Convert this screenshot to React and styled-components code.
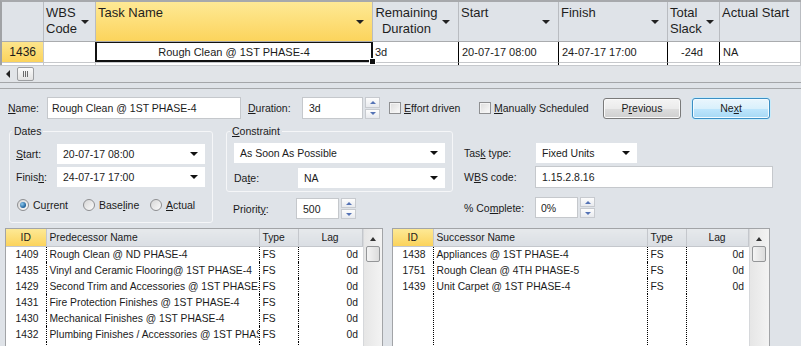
import React from 'react';
import styled, { createGlobalStyle } from 'styled-components';

const GlobalStyle = createGlobalStyle`
  html, body { margin: 0; padding: 0; background: #dfe3e8; }
  body { font-family: "Liberation Sans", Arial, sans-serif; color: #1b1b1b; }
  * { box-sizing: border-box; }
`;

const Screen = styled.div`
  width: 801px;
  height: 346px;
  overflow: hidden;
  background: #dfe3e8;
  display: flex;
  flex-direction: column;
  & > * { flex-shrink: 0; }
`;

/* ---------- top sheet ---------- */
const sheetCols = '42px 52px 277px 86px 100px 109px 52px 1fr';

const Sheet = styled.div`
  border-top: 2px solid #a7a9ac;
  border-left: 2px solid #a0a2a5;
  background: #fff;
`;

const HeadRow = styled.div`
  display: grid;
  grid-template-columns: ${sheetCols};
  height: 40px;
  background: #dfe3e8;
  border-bottom: 1px solid #a9abae;
`;

const HeadCell = styled.div`
  display: flex;
  padding: 3px 0 0 2px;
  border-right: 1px solid #b9bcc1;
  font-size: 13px;
  line-height: 16px;
  color: #1e1e1e;
  background: ${(p) => (p.$active ? 'linear-gradient(#fee995, #fcd45c)' : '#dfe3e8')};
`;

const HeadText = styled.div`
  flex: 1;
  text-align: ${(p) => p.$align || 'left'};
`;

const HeadArrow = styled.span`
  align-self: center;
  margin: 0 8px 3px 4px;
  width: 0;
  height: 0;
  border-left: 4px solid transparent;
  border-right: 4px solid transparent;
  border-top: 4px solid #222;
`;

const Body = styled.div`
  height: 23px;
  overflow: hidden;
`;

const DataRow = styled.div`
  display: grid;
  grid-template-columns: ${sheetCols};
  height: 21px;
`;

const Cell = styled.div`
  position: relative;
  display: flex;
  align-items: center;
  justify-content: ${(p) => p.$justify || 'flex-start'};
  padding: ${(p) => p.$pad || '0 3px'};
  font-size: ${(p) => p.$size || '11px'};
  border-right: 1px solid ${(p) => (p.$dark ? '#000' : '#c6c8cb')};
  border-bottom: 1px solid #c6c8cb;
  background: ${(p) => (p.$yellow ? 'linear-gradient(#fde58c, #fbd35c)' : '#fff')};
  white-space: nowrap;
`;

const SelectedCell = styled(Cell)`
  box-shadow: inset 0 0 0 2px #111;
  margin: -1px 0 0 -1px;
  border-right: none;
  z-index: 2;
  &::after {
    content: '';
    position: absolute;
    right: -3px;
    bottom: -3px;
    width: 5px;
    height: 5px;
    background: #111;
    border: 1px solid #fff;
  }
`;

const HScroll = styled.div`
  height: 18px;
  display: flex;
  align-items: center;
  gap: 7px;
  padding-left: 6px;
  background: #e1e4e8;
  border-top: 1px solid #c6c9cd;
  border-bottom: 1px solid #a4a6a9;
`;

const LeftTri = styled.span`
  width: 0;
  height: 0;
  border-top: 4px solid transparent;
  border-bottom: 4px solid transparent;
  border-right: 4px solid #222;
`;

const HThumb = styled.div`
  width: 17px;
  height: 14px;
  border: 1px solid #9c9ea1;
  border-radius: 2px;
  background: linear-gradient(#fbfbfb, #e2e2e2);
  display: flex;
  align-items: center;
  justify-content: center;
  gap: 1px;
  span {
    width: 1px;
    height: 6px;
    background: #6b6b6b;
  }
`;

const Band = styled.div`
  height: 6px;
  border-bottom: 1px solid #a6a8ab;
`;

/* ---------- form ---------- */
const Form = styled.div`
  flex: 1 1 auto;
  min-height: 0;
  overflow: hidden;
  padding-top: 8px;
  display: flex;
  flex-direction: column;
  & > * { flex-shrink: 0; }
`;

const TopLine = styled.div`
  display: flex;
  align-items: center;
  height: 22px;
  padding: 0 31px 0 8px;
`;

const Label = styled.div`
  width: ${(p) => p.$w}px;
  margin-left: ${(p) => p.$ml || 0}px;
  font-size: 10.5px;
  color: #1b1b1b;
  white-space: nowrap;
  flex-shrink: 0;
`;

const TextBox = styled.div`
  width: ${(p) => p.$w}px;
  height: ${(p) => p.$h || 22}px;
  flex-shrink: 0;
  display: flex;
  align-items: center;
  padding-left: ${(p) => p.$pl || 5}px;
  background: #fff;
  border: 1px solid #c5c8cc;
  font-size: 10.5px;
  white-space: nowrap;
`;

const Combo = styled(TextBox)`
  justify-content: space-between;
  padding-right: 6px;
  border-color: #fff;
`;

const ComboArrow = styled.span`
  width: 0;
  height: 0;
  border-left: 4px solid transparent;
  border-right: 4px solid transparent;
  border-top: 4px solid #111;
`;

const Spin = styled.div`
  width: 15px;
  height: ${(p) => p.$h || 22}px;
  margin-left: 2px;
  display: flex;
  flex-direction: column;
  gap: 1px;
  flex-shrink: 0;
`;

const SpinHalf = styled.div`
  flex: 1;
  display: flex;
  align-items: center;
  justify-content: center;
  border: 1px solid #c7cacf;
  background: linear-gradient(#fdfdfd, #e8eaee);
  &::before {
    content: '';
    width: 0;
    height: 0;
    border-left: 3px solid transparent;
    border-right: 3px solid transparent;
    ${(p) => (p.$down ? 'border-top: 3px solid #5573b5;' : 'border-bottom: 3px solid #5573b5;')}
  }
`;

const Check = styled.span`
  width: 12px;
  height: 12px;
  margin-left: ${(p) => p.$ml || 0}px;
  flex-shrink: 0;
  border: 1px solid #8e8f91;
  background: linear-gradient(135deg, #dcdcdc, #fbfbfb);
  box-shadow: inset 0 0 0 1px #f4f4f4;
`;

const Button = styled.div`
  width: 78px;
  height: 21px;
  margin-left: ${(p) => p.$ml || '0'};
  display: flex;
  align-items: center;
  justify-content: center;
  font-size: 10.5px;
  border-radius: 3px;
  border: 1px solid ${(p) => (p.$primary ? '#3c8fc4' : '#7a7a7a')};
  background: ${(p) =>
    p.$primary
      ? 'linear-gradient(#eaf6fd 0%, #d9f0fc 50%, #bee6fd 51%, #a7d9f5 100%)'
      : 'linear-gradient(#f4f4f4 0%, #ebebeb 50%, #dddddd 51%, #cfcfcf 100%)'};
  box-shadow: ${(p) => (p.$primary ? '0 0 0 1px #c7ebfb, inset 0 0 0 1px #f3fbff' : 'inset 0 0 0 1px #fafafa')};
`;

const MidLine = styled.div`
  display: flex;
  margin-top: 6px;
  height: 98px;
`;

const Group = styled.fieldset`
  margin: 0 0 0 ${(p) => p.$ml}px;
  width: ${(p) => p.$w}px;
  height: ${(p) => p.$h}px;
  padding: ${(p) => p.$pad};
  border: 1px solid #f5f6f8;
  border-radius: 3px;
  min-width: 0;
  flex-shrink: 0;
`;

const Legend = styled.legend`
  margin-left: -4px;
  padding: 0 2px;
  font-size: 10.5px;
  line-height: 12px;
  color: #1b1b1b;
`;

const FieldRow = styled.div`
  display: flex;
  align-items: center;
  margin-top: ${(p) => p.$mt || 0}px;
  padding-left: ${(p) => p.$pl || 0}px;
`;

const RadioItem = styled.div`
  display: flex;
  align-items: center;
  gap: 4px;
  width: ${(p) => p.$w}px;
  font-size: 10.5px;
  flex-shrink: 0;
`;

const Radio = styled.span`
  width: 12px;
  height: 12px;
  border-radius: 50%;
  border: 1px solid #8e8f91;
  background: linear-gradient(135deg, #d6d6d6, #fbfbfb);
  display: flex;
  align-items: center;
  justify-content: center;
  &::after {
    content: '';
    display: ${(p) => (p.$on ? 'block' : 'none')};
    width: 6px;
    height: 6px;
    border-radius: 50%;
    background: radial-gradient(circle at 35% 35%, #8ccaf0, #1d5f99 70%);
  }
`;

const Column = styled.div`
  display: flex;
  flex-direction: column;
  margin-left: ${(p) => p.$ml || 0}px;
  padding-top: ${(p) => p.$pt || 0}px;
`;

/* ---------- link tables ---------- */
const Links = styled.div`
  flex: 1 1 auto;
  min-height: 0;
  display: flex;
  margin-top: 5px;
  padding-left: 5px;
`;

const LinkBox = styled.div`
  width: 378px;
  height: calc(100% + 4px);
  margin-right: ${(p) => p.$mr || 0}px;
  display: flex;
  border: 1px solid #a2a4a7;
  background: #fff;
`;

const LinkTable = styled.table`
  width: ${(p) => p.$w}px;
  flex: none;
  height: 100%;
  table-layout: fixed;
  border-collapse: collapse;
  font-size: 10.3px;
`;

const Th = styled.th`
  height: 17px;
  padding: 0 3px;
  font-weight: normal;
  text-align: ${(p) => p.$align || 'left'};
  border-right: 1px solid #c4c7cc;
  border-bottom: 1px solid #c4c7cc;
  background: ${(p) => (p.$yellow ? 'linear-gradient(#fde995, #fbd35c)' : 'linear-gradient(#e6e9ec, #dadee3)')};
  white-space: nowrap;
  overflow: hidden;
`;

const Td = styled.td`
  height: 16px;
  padding: ${(p) => (p.$right ? '0 4px 0 0' : '0 3px')};
  text-align: ${(p) => (p.$right ? 'right' : 'left')};
  border-right: ${(p) => (p.$last ? 'none' : '1px dotted #000')};
  white-space: nowrap;
  overflow: hidden;
  text-overflow: clip;
  vertical-align: middle;
`;

const IdTd = styled(Td)`
  padding-right: 7px;
  text-align: right;
`;

const Filler = styled.tr`
  height: auto;
  td { height: auto; }
`;

const VScroll = styled.div`
  flex: 1;
  display: flex;
  flex-direction: column;
  align-items: center;
  padding-top: 8px;
  border-left: 1px solid #d6d8db;
  background: linear-gradient(90deg, #e6e6e6, #f3f3f3);
`;

const UpTri = styled.span`
  width: 0;
  height: 0;
  border-left: 3.5px solid transparent;
  border-right: 3.5px solid transparent;
  border-bottom: 4px solid #333;
`;

const VThumb = styled.div`
  margin-top: 5px;
  width: 14px;
  height: 16px;
  border: 1px solid #949698;
  border-radius: 2px;
  background: linear-gradient(90deg, #f4f4f4, #dcdcdc);
`;

const predecessors = [
  ['1409', 'Rough Clean @ ND PHASE-4'],
  ['1435', 'Vinyl and Ceramic Flooring@ 1ST PHASE-4'],
  ['1429', 'Second Trim and Accessories @ 1ST PHASE-4'],
  ['1431', 'Fire Protection Finishes @ 1ST PHASE-4'],
  ['1430', 'Mechanical Finishes @ 1ST PHASE-4'],
  ['1432', 'Plumbing Finishes / Accessories @ 1ST PHASE-4'],
];

const successors = [
  ['1438', 'Appliances @ 1ST PHASE-4'],
  ['1751', 'Rough Clean @ 4TH PHASE-5'],
  ['1439', 'Unit Carpet @ 1ST PHASE-4'],
];

function LinkGrid({ title, rows, widths, mr }) {
  const total = widths.reduce((a, b) => a + b, 0);
  return (
    <LinkBox $mr={mr}>
      <LinkTable $w={total}>
        <colgroup>
          {widths.map((w, i) => (
            <col key={i} style={{ width: w }} />
          ))}
        </colgroup>
        <thead>
          <tr>
            <Th $yellow $align="center">ID</Th>
            <Th>{title}</Th>
            <Th>Type</Th>
            <Th $align="center">Lag</Th>
          </tr>
        </thead>
        <tbody>
          {rows.map(([id, name]) => (
            <tr key={id}>
              <IdTd>{id}</IdTd>
              <Td>{name}</Td>
              <Td>FS</Td>
              <Td $right $last>0d</Td>
            </tr>
          ))}
          <Filler>
            <Td />
            <Td />
            <Td />
            <Td $last />
          </Filler>
        </tbody>
      </LinkTable>
      <VScroll>
        <UpTri />
        <VThumb />
      </VScroll>
    </LinkBox>
  );
}

function SpinBox({ h }) {
  return (
    <Spin $h={h}>
      <SpinHalf />
      <SpinHalf $down />
    </Spin>
  );
}

export default function App() {
  return (
    <Screen>
      <GlobalStyle />
      <Sheet>
        <HeadRow>
          <HeadCell />
          <HeadCell>
            <HeadText>WBS<br />Code</HeadText>
            <HeadArrow />
          </HeadCell>
          <HeadCell $active>
            <HeadText>Task Name</HeadText>
            <HeadArrow />
          </HeadCell>
          <HeadCell>
            <HeadText $align="center">Remaining<br />Duration</HeadText>
            <HeadArrow />
          </HeadCell>
          <HeadCell>
            <HeadText>Start</HeadText>
            <HeadArrow />
          </HeadCell>
          <HeadCell>
            <HeadText>Finish</HeadText>
            <HeadArrow />
          </HeadCell>
          <HeadCell>
            <HeadText>Total<br />Slack</HeadText>
            <HeadArrow />
          </HeadCell>
          <HeadCell>
            <HeadText>Actual Start</HeadText>
          </HeadCell>
        </HeadRow>
        <Body>
          <DataRow>
            <Cell $yellow $justify="flex-end" $pad="0 7px 0 0" $size="12px">1436</Cell>
            <Cell />
            <SelectedCell $justify="center">Rough Clean @ 1ST PHASE-4</SelectedCell>
            <Cell $dark $pad="0 2px">3d</Cell>
            <Cell $dark>20-07-17 08:00</Cell>
            <Cell $dark>24-07-17 17:00</Cell>
            <Cell $dark $justify="flex-end" $pad="0 16px 0 0">-24d</Cell>
            <Cell>NA</Cell>
          </DataRow>
          <DataRow>
            <Cell />
            <Cell />
            <Cell />
            <Cell $dark />
            <Cell $dark />
            <Cell $dark />
            <Cell $dark />
            <Cell />
          </DataRow>
        </Body>
      </Sheet>
      <HScroll>
        <LeftTri />
        <HThumb>
          <span />
          <span />
          <span />
        </HThumb>
      </HScroll>
      <Band />

      <Form>
        <TopLine>
          <Label $w={39}><u>N</u>ame:</Label>
          <TextBox $w={194} $pl={4}>Rough Clean @ 1ST PHASE-4</TextBox>
          <Label $w={54} $ml={7}><u>D</u>uration:</Label>
          <TextBox $w={61} $pl={6}>3d</TextBox>
          <SpinBox />
          <Check $ml={9} />
          <Label $w={75} $ml={3}><u>E</u>ffort driven</Label>
          <Check />
          <Label $w={100} $ml={3}><u>M</u>anually Scheduled</Label>
          <Button $ml="auto">P<u>r</u>evious</Button>
          <Button $primary $ml="11px">Ne<u>x</u>t</Button>
        </TopLine>

        <MidLine>
          <Group $ml={9} $w={204} $h={98} $pad="7px 6px 0 6px">
            <Legend>Dates</Legend>
            <FieldRow>
              <Label $w={41}><u>S</u>tart:</Label>
              <Combo $w={148} $h={20}>20-07-17 08:00<ComboArrow /></Combo>
            </FieldRow>
            <FieldRow $mt={3}>
              <Label $w={41}>Finis<u>h</u>:</Label>
              <Combo $w={148} $h={20}>24-07-17 17:00<ComboArrow /></Combo>
            </FieldRow>
            <FieldRow $mt={12} $pl={1}>
              <RadioItem $w={66}><Radio $on /><span>Cu<u>r</u>rent</span></RadioItem>
              <RadioItem $w={67}><Radio /><span>Base<u>l</u>ine</span></RadioItem>
              <RadioItem $w={60}><Radio /><span><u>A</u>ctual</span></RadioItem>
            </FieldRow>
          </Group>

          <Column $ml={13}>
            <Group $ml={0} $w={227} $h={67} $pad="6px 6px 0 7px">
              <Legend><u>C</u>onstraint</Legend>
              <Combo $w={211} $h={20}>As Soon As Possible<ComboArrow /></Combo>
              <FieldRow $mt={5}>
                <Label $w={64}>Da<u>t</u>e:</Label>
                <Combo $w={147} $h={20}>NA<ComboArrow /></Combo>
              </FieldRow>
            </Group>
            <FieldRow $mt={6} $pl={7}>
              <Label $w={63}>Priorit<u>y</u>:</Label>
              <TextBox $w={43} $h={21} $pl={6}>500</TextBox>
              <SpinBox h={21} />
            </FieldRow>
          </Column>

          <Column $ml={11} $pt={18}>
            <FieldRow>
              <Label $w={72}>Tas<u>k</u> type:</Label>
              <Combo $w={101} $h={20}>Fixed Units<ComboArrow /></Combo>
            </FieldRow>
            <FieldRow $mt={3}>
              <Label $w={71}>W<u>B</u>S code:</Label>
              <TextBox $w={238} $pl={6}>1.15.2.8.16</TextBox>
            </FieldRow>
            <FieldRow $mt={9}>
              <Label $w={71}>% Co<u>m</u>plete:</Label>
              <TextBox $w={43} $h={21} $pl={5}>0%</TextBox>
              <SpinBox h={21} />
            </FieldRow>
          </Column>
        </MidLine>

        <Links>
          <LinkGrid
            title="Predecessor Name"
            rows={predecessors}
            widths={[40, 213, 39, 64]}
            mr={9}
          />
          <LinkGrid
            title="Successor Name"
            rows={successors}
            widths={[40, 214, 39, 62]}
          />
        </Links>
      </Form>
    </Screen>
  );
}
